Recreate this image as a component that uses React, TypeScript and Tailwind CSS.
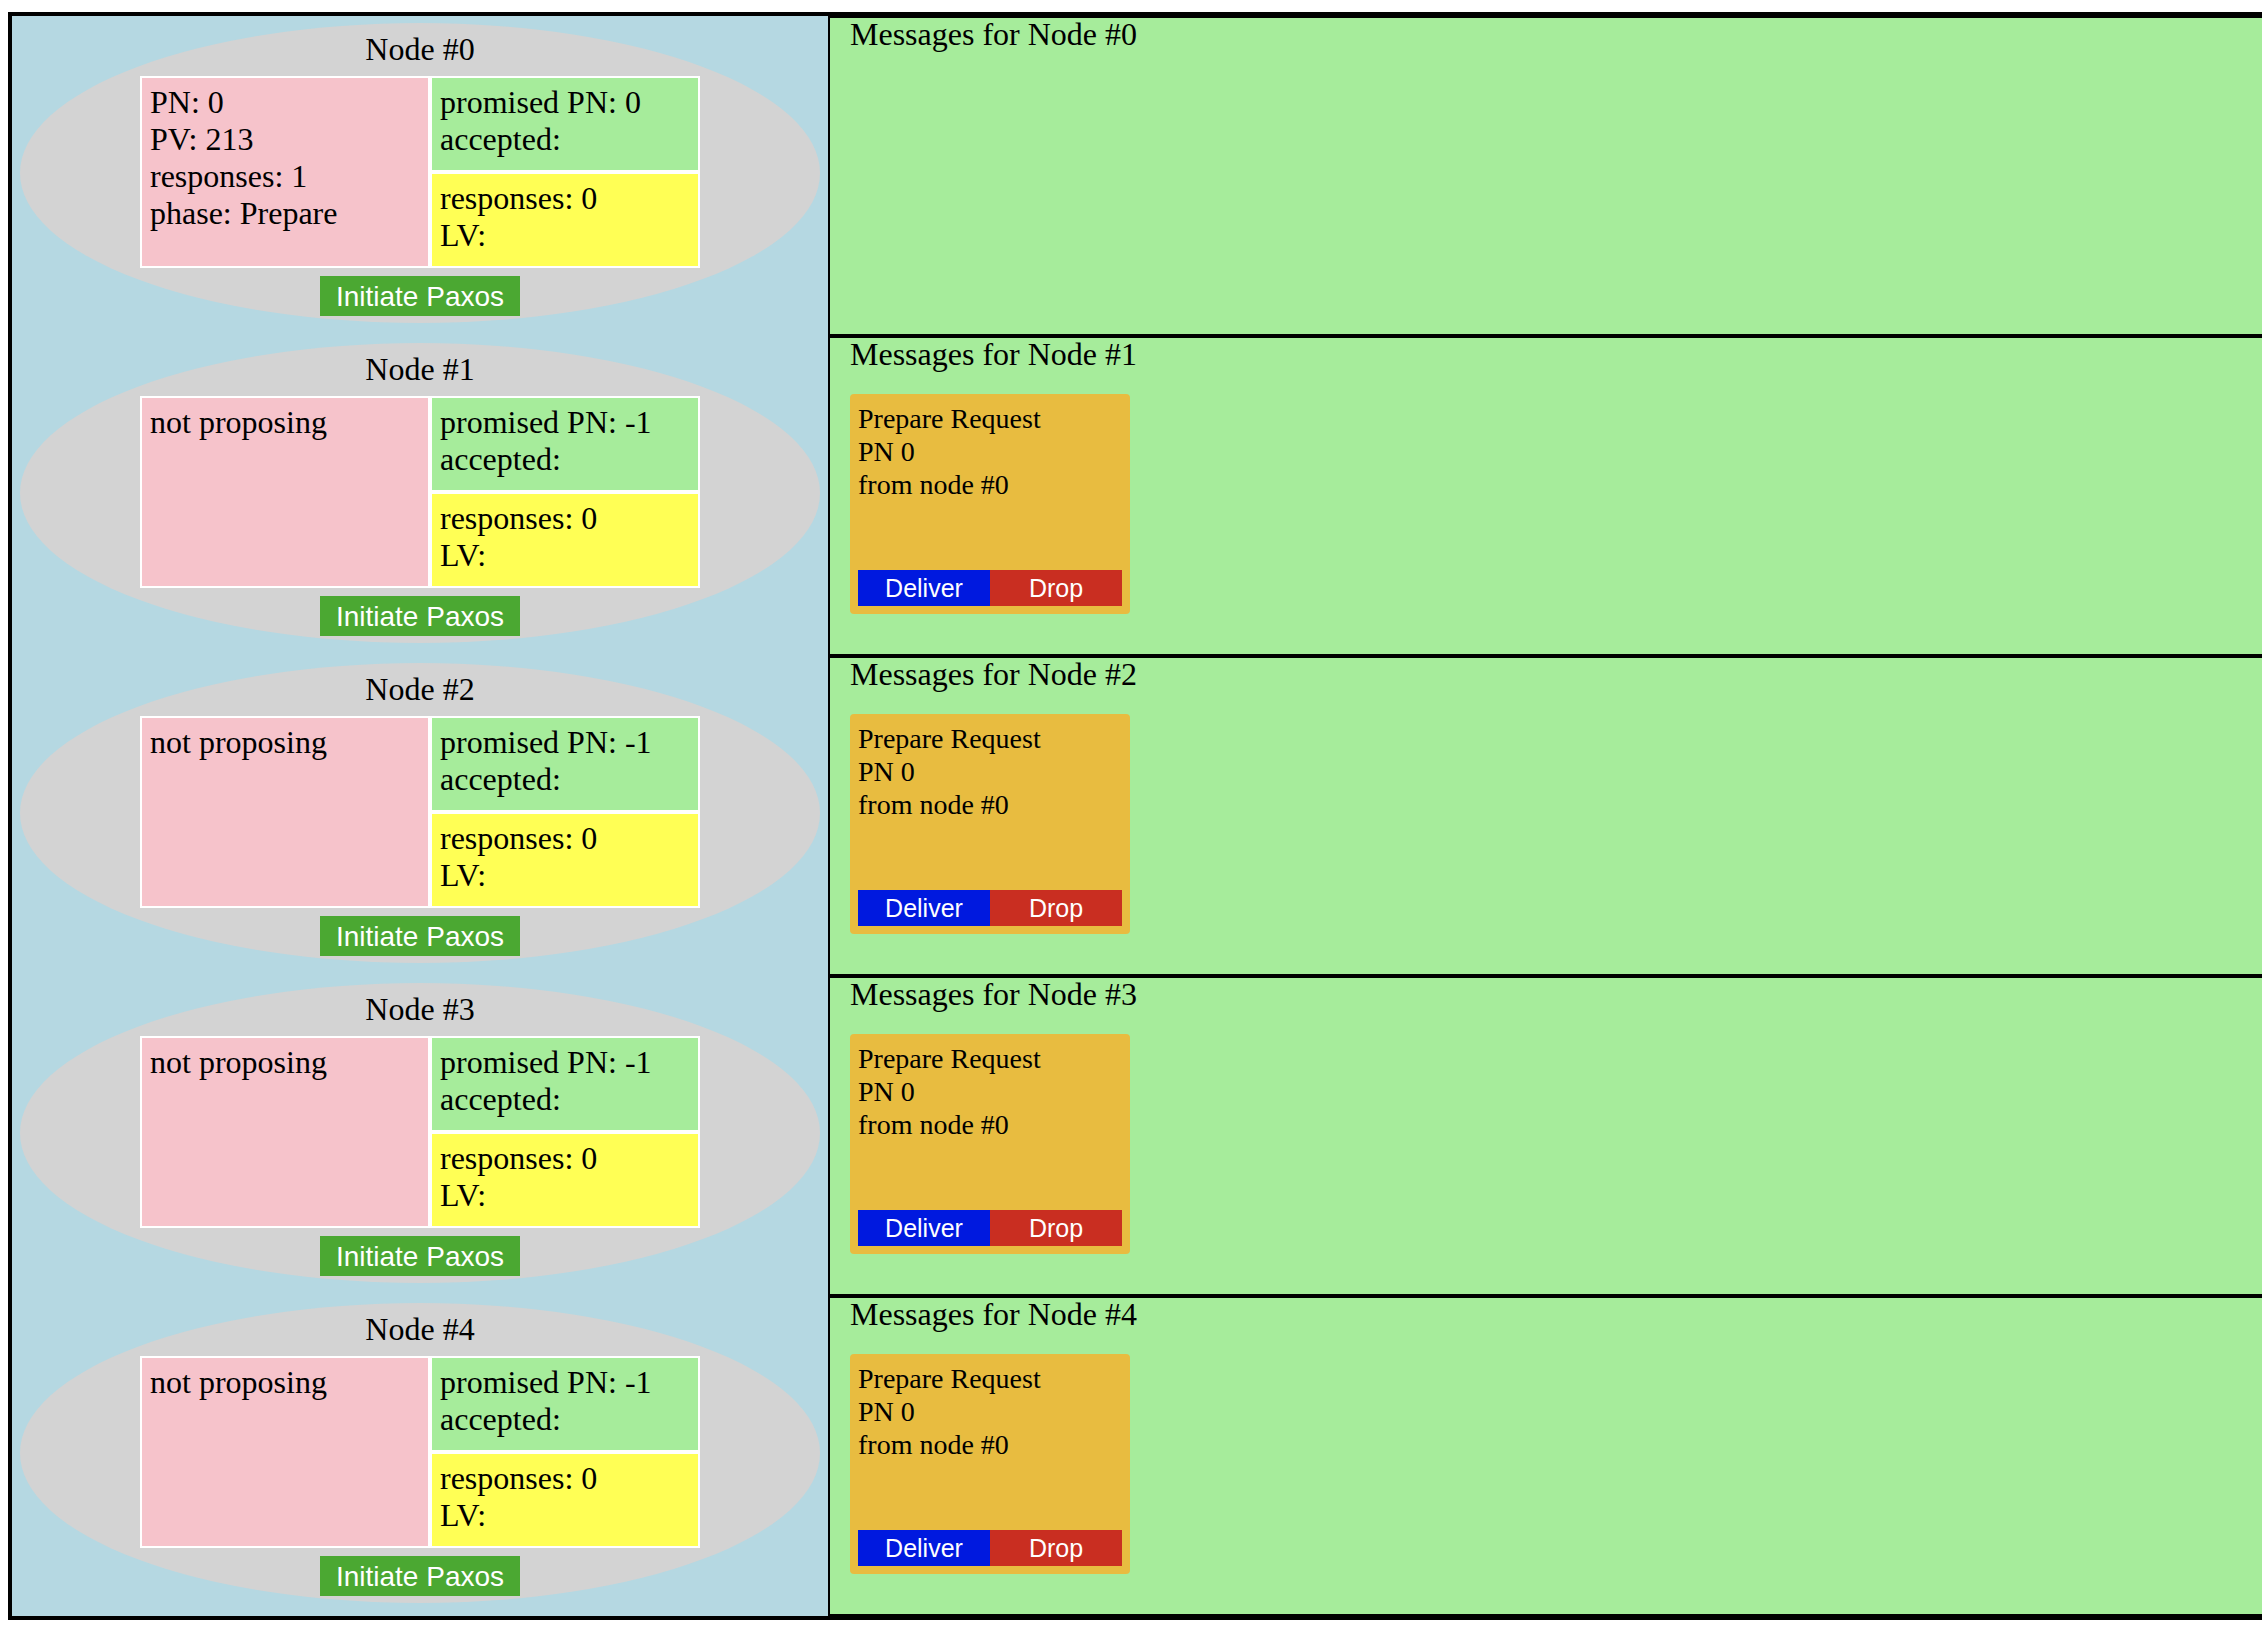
import React from "react";

type NodeState = {
  id: number;
  proposer: string[];
  promised: number;
};

const nodes: NodeState[] = [
  { id: 0, proposer: ["PN: 0", "PV: 213", "responses: 1", "phase: Prepare"], promised: 0 },
  { id: 1, proposer: ["not proposing"], promised: -1 },
  { id: 2, proposer: ["not proposing"], promised: -1 },
  { id: 3, proposer: ["not proposing"], promised: -1 },
  { id: 4, proposer: ["not proposing"], promised: -1 },
];

// messages waiting in each node's inbox
const inbox: Record<number, { kind: string; pn: number; from: number }[]> = {
  0: [],
  1: [{ kind: "Prepare Request", pn: 0, from: 0 }],
  2: [{ kind: "Prepare Request", pn: 0, from: 0 }],
  3: [{ kind: "Prepare Request", pn: 0, from: 0 }],
  4: [{ kind: "Prepare Request", pn: 0, from: 0 }],
};

function NodeOval({ node }: { node: NodeState }) {
  return (
    <div className="w-[800px] h-[300px] rounded-[50%] bg-[#d3d3d3] flex flex-col items-center pt-[8px]">
      <div className="text-[32px] leading-[37px]">Node #{node.id}</div>
      <div className="mt-[8px] w-[560px] h-[192px] bg-white p-[2px] grid grid-cols-[286px_266px] grid-rows-[92px_92px] gap-[4px] text-[32px] leading-[37px]">
        <div className="row-span-2 bg-[#f6c3cb] pt-[6px] pl-[8px]">
          {node.proposer.map((l) => (
            <div key={l}>{l}</div>
          ))}
        </div>
        <div className="bg-[#a6ec9b] pt-[6px] pl-[8px]">
          <div>promised PN: {node.promised}</div>
          <div>accepted:</div>
        </div>
        <div className="bg-[#ffff55] pt-[6px] pl-[8px]">
          <div>responses: 0</div>
          <div>LV:</div>
        </div>
      </div>
      <button className="mt-[8px] h-[40px] w-[200px] bg-[#4ba832] text-white text-[28px] font-['Liberation_Sans',sans-serif]">
        Initiate Paxos
      </button>
    </div>
  );
}

function MessageRow({ id }: { id: number }) {
  return (
    <div className="h-[320px] border-2 border-r-0 border-black bg-[#a6ec9b] pl-[20px]">
      <div className="text-[32px] leading-[33px]">Messages for Node #{id}</div>
      <div className="flex gap-[8px] mt-[23px]">
        {inbox[id].map((m, i) => (
          <div
            key={i}
            className="w-[280px] h-[220px] rounded-[4px] bg-[#e8bc40] p-[8px] flex flex-col text-[28px] leading-[33px]"
          >
            <div>{m.kind}</div>
            <div>PN {m.pn}</div>
            <div>from node #{m.from}</div>
            <div className="mt-auto flex h-[36px] text-white text-[25px] font-['Liberation_Sans',sans-serif]">
              <button className="flex-1 bg-[#0019df]">Deliver</button>
              <button className="flex-1 bg-[#c92e21]">Drop</button>
            </div>
          </div>
        ))}
      </div>
    </div>
  );
}

export default function App() {
  return (
    <div className="w-full overflow-hidden bg-white pt-[12px] pl-[8px] pb-[18px] font-['Liberation_Serif',serif] text-black">
      <div className="w-[2400px] flex border-4 border-black">
        <div className="w-[816px] shrink-0 bg-[#b5d8e2] flex flex-col items-center gap-[20px] pt-[7px]">
          {nodes.map((n) => (
            <NodeOval key={n.id} node={n} />
          ))}
        </div>
        <div className="flex-1 flex flex-col">
          {nodes.map((n) => (
            <MessageRow key={n.id} id={n.id} />
          ))}
        </div>
      </div>
    </div>
  );
}
